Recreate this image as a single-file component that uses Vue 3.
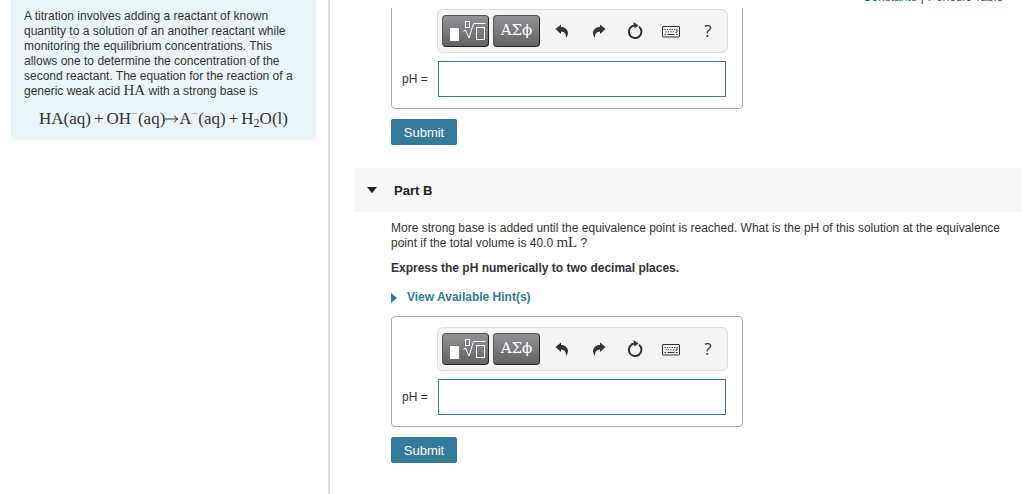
<script setup>
const parts = [
  { id: 'a', clipped: true },
  { id: 'b', title: 'Part B' },
]
</script>

<template>
  <div class="page">
    <aside class="side">
      <div class="intro">
        <p>
          A titration involves adding a reactant of known<br>
          quantity to a solution of an another reactant while<br>
          monitoring the equilibrium concentrations. This<br>
          allows one to determine the concentration of the<br>
          second reactant. The equation for the reaction of a<br>
          generic weak acid <span class="math">HA</span> with a strong base is
        </p>
        <div class="equation">
          <span>HA(aq)</span><span class="op">+</span><span>OH<sup>−</sup></span><span>(aq)</span>
          <svg class="arrow" viewBox="0 0 14 10" aria-label="yields"><path d="M0 5H13M9.500 1.500Q10.500 4.200 13 5Q10.500 5.800 9.500 8.500" /></svg>
          <span>A<sup>−</sup></span><span>(aq)</span><span class="op">+</span><span>H<sub>2</sub>O(l)</span>
        </div>
      </div>
    </aside>

    <main class="main">
      <nav class="topbar">
        <a href="#constants">Constants</a> | <a href="#table">Periodic Table</a>
      </nav>

      <div class="content">
        <section v-for="part in parts" :key="part.id" :class="{ clipped: part.clipped }">
          <h2 v-if="part.title" class="part-head">
            <svg viewBox="0 0 10 6"><path d="M0 0H10L5.600 5.400Q5 6 4.400 5.400Z" /></svg>
            {{ part.title }}
          </h2>
          <div class="part-body">
            <div v-if="part.title" class="question">
              <p>
                More strong base is added until the equivalence point is reached. What is the pH of this solution at the equivalence<br>
                point if the total volume is 40.0 <span class="math">mL</span> ?
              </p>
              <p class="strong">Express the pH numerically to two decimal places.</p>
              <a class="hint" href="#hints">
                <svg viewBox="0 0 6 10"><path d="M0 0L6 5L0 10Z" /></svg>
                View Available Hint(s)
              </a>
            </div>

            <form @submit.prevent>
              <div class="answer">
                <div class="toolbar">
                  <button type="button" class="dark template" aria-label="Templates">
                    <svg class="root" viewBox="0 0 36 22">
                      <rect x="0" y="8" width="9" height="13" fill="#fff" stroke="none" />
                      <rect x="15.500" y="1.500" width="4" height="6" />
                      <path d="M13.500 11.500L15.500 10L19 18L23.500 3.500H35.500" />
                      <rect x="26.500" y="7.500" width="8" height="12" />
                    </svg>
                  </button>
                  <button type="button" class="dark greek">ΑΣϕ</button>
                  <button type="button" class="tool" aria-label="Undo">
                    <svg viewBox="0 0 14 14"><path d="M0.500 5L6 0.500V3C10 3 13 5.500 13 9.500Q12.600 12.500 11 14Q11.600 7.600 6 7.500V10Z" /></svg>
                  </button>
                  <button type="button" class="tool" aria-label="Redo">
                    <svg viewBox="0 0 14 14"><path d="M13.500 5L8 0.500V3C4 3 1 5.500 1 9.500Q1.400 12.500 3 14Q2.400 7.600 8 7.500V10Z" /></svg>
                  </button>
                  <button type="button" class="tool" aria-label="Reset">
                    <svg class="reset" viewBox="0 0 16 18"><path class="ring" d="M12 4.800A6.300 6.300 0 1 1 7.500 3.500" /><path d="M6.500 0L11.500 3.500L7.500 6.500Z" /></svg>
                  </button>
                  <button type="button" class="tool" aria-label="Keyboard shortcuts">
                    <svg class="keys" viewBox="0 0 18 12">
                      <rect x="0.500" y="0.500" width="17" height="10.500" rx="0.500" />
                      <path d="M2.500 3.500H14M3.500 5.800H13" stroke-dasharray="1.200 1.200" />
                      <path d="M15 3V6.300H13.500M2.500 8.500H4M5.500 8.500H12.500M14 8.500H15.500" />
                    </svg>
                  </button>
                  <button type="button" class="tool help" aria-label="Help">?</button>
                </div>
                <label :for="'ph-' + part.id">pH =</label>
                <input :id="'ph-' + part.id" type="text">
              </div>
              <button class="submit" type="submit">Submit</button>
            </form>
          </div>
        </section>
      </div>
    </main>
  </div>
</template>

<style>
body { margin: 0; background: #fff; }
</style>

<style scoped>
.page {
  display: flex;
  height: 100vh;
  overflow: hidden;
  font: 12px/15px "Liberation Sans", Arial, sans-serif;
  color: #333;
}
.side {
  flex: 0 0 330px;
  padding: 0 12px 0 11px;
  border-right: 2px solid #d5dfee;
  box-sizing: border-box;
}
.intro {
  padding: 9px 0 9px 13px;
  background: #eaf5f7;
}
p { margin: 0; white-space: nowrap; }
.math { font: 15px/0 "Liberation Serif", "Times New Roman", serif; }
.equation {
  display: flex;
  align-items: center;
  justify-content: center;
  margin: 8px 13px 0 0;
  font: 17px/24px "Liberation Serif", "Times New Roman", serif;
  white-space: nowrap;
}
.equation .op { margin: 0 3px; }
sup, sub { font-size: 12px; line-height: 0; }
sup { color: #8a9294; }
sub { vertical-align: -3px; }
.arrow { flex: none; width: 14px; height: 10px; fill: none; stroke: #333; }

.main { flex: 1; min-width: 0; display: flex; flex-direction: column; }
.topbar {
  flex: none;
  display: flex;
  align-items: flex-end;
  justify-content: flex-end;
  gap: 4px;
  height: 5px;
  padding: 0 21px 3px 0;
}
.topbar a { color: #1a6585; text-decoration: none; }
.content { flex: 1; overflow: hidden; padding: 0 2px 0 24px; }
.clipped { margin-top: -10px; margin-bottom: 23px; }

.part-head {
  display: flex;
  align-items: center;
  gap: 17px;
  margin: 0 0 9px;
  padding: 0 13px;
  height: 44px;
  background: #f8f8f8;
  color: #222;
  font-size: 13px;
}
.part-head svg { width: 10px; height: 6px; fill: #222; }
.part-body { padding-left: 37px; }
.question { display: flex; flex-direction: column; align-items: flex-start; margin-bottom: 11px; }
.strong { margin: 10px 0 14px; font-weight: 700; }
.hint {
  display: flex;
  align-items: center;
  gap: 10px;
  color: #347a9b;
  font-weight: 700;
  text-decoration: none;
}
.hint svg { width: 6px; height: 10px; fill: #347a9b; }

form { display: flex; flex-direction: column; align-items: flex-start; gap: 10px; }
.answer {
  display: grid;
  grid-template-columns: 27px 291px;
  gap: 8px;
  align-items: center;
  padding: 10px 14px 11px 10px;
  border: 1px solid #aaa;
  border-radius: 4px;
}
.toolbar {
  grid-column: 2;
  display: flex;
  align-items: center;
  height: 44px;
  padding: 0 1px 1px 4px;
  box-sizing: border-box;
  border: 1px solid #ddd;
  border-radius: 6px;
  background: #f4f4f4;
}
button { padding: 0; border: 0; background: none; font-family: inherit; cursor: pointer; }
.dark {
  display: flex;
  align-items: center;
  justify-content: center;
  width: 47px;
  height: 32px;
  margin-right: 4px;
  box-sizing: border-box;
  border: 1px solid #555;
  border-right-color: #222;
  border-bottom-color: #222;
  border-radius: 4px;
  background: linear-gradient(#929296, #636366);
  color: #fff;
}
.template { padding-left: 4px; }
.root { width: 36px; height: 22px; fill: none; stroke: #fff; }
.greek { padding-bottom: 2px; font: 15px/20px "DejaVu Serif", "Liberation Serif", serif; }
.tool {
  flex: 1;
  display: flex;
  align-items: center;
  justify-content: center;
  height: 32px;
  color: #333;
}
.tool svg { width: 14px; height: 14px; fill: #333; }
.tool .reset { width: 16px; height: 18px; }
.tool .ring { fill: none; stroke: #333; stroke-width: 2; }
.tool .keys { width: 18px; height: 12px; margin-top: 3px; fill: none; stroke: #333; }
.help { font: 17px/20px "Open Sans", "Noto Sans", sans-serif; }
label { white-space: nowrap; }
input {
  width: 288px;
  height: 36px;
  margin-left: 1px;
  box-sizing: border-box;
  border: 1px solid #347a9b;
  padding: 0 8px;
  font: inherit;
  outline: none;
}
.submit {
  width: 66px;
  height: 26px;
  border-radius: 2px;
  background: #347a9b;
  color: #fff;
  font-size: 13px;
}
</style>
